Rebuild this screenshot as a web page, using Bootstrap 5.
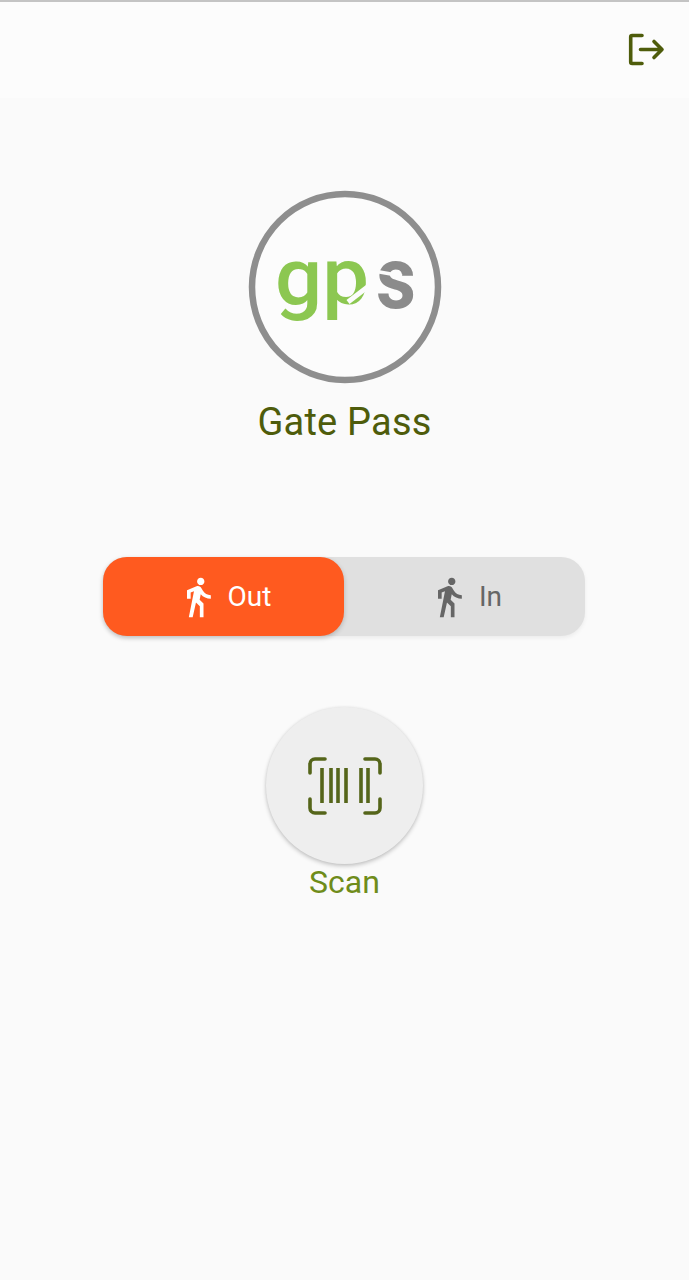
<!DOCTYPE html>
<html lang="en">
<head>
    <meta charset="UTF-8">
    <title>Gate Pass</title>
    <link href="https://cdn.jsdelivr.net/npm/bootstrap@5.3.3/dist/css/bootstrap.min.css" rel="stylesheet">
    <style>
        body {
            background: #fafafa;
            font-family: Roboto, "Liberation Sans", sans-serif;
        }
        .app-screen { min-height: 1280px; }
        .top-bar {
            height: 98px;
            background: #fcfcfc;
            border-top: 2px solid #c4c4c4;
            padding: 30px 23px 0 0;
        }
        .gp-logo {
            margin-top: 92px;
            filter: blur(.5px);
        }
        .app-title {
            color: #4e5c0b;
            font-size: 38px;
            line-height: 42px;
            margin-top: 17px;
            letter-spacing: .2px;
        }
        .mode-toggle {
            width: 482px;
            height: 79px;
            margin-top: 114px;
            margin-right: 1px;
            background: #e0e0e0;
            border-radius: 24px;
            box-shadow: 0 2px 4px rgba(0,0,0,.06);
        }
        .mode-btn {
            width: 241px;
            border-radius: 24px;
            font-size: 28px;
            color: #666;
            gap: 8px;
        }
        .mode-btn.is-active {
            background: #ff5a1f;
            color: #fff;
            box-shadow: 0 2px 5px rgba(0,0,0,.2);
        }
        .scan-btn {
            width: 157px;
            height: 157px;
            margin-top: 71px;
            background: #eeeeee;
            box-shadow: 0 2px 4px rgba(0,0,0,.22), 0 0 3px rgba(0,0,0,.06);
        }
        .scan-label {
            color: #6f8c1a;
            font-size: 32px;
            line-height: 36px;
        }
    </style>
</head>
<body>
    <div class="app-screen d-flex flex-column align-items-center">
        <div class="top-bar w-100 d-flex justify-content-end align-items-start">
            <svg width="38" height="36" viewBox="0 0 38 36" fill="none" stroke="#4e5c0b" stroke-width="3.6" stroke-linecap="round" stroke-linejoin="round">
                <path d="M14 3.5H4.2a1.5 1.5 0 0 0-1.5 1.5v25a1.5 1.5 0 0 0 1.5 1.5H14"/>
                <path d="M12.5 17.5H34M26 9.5l8 8-8 8"/>
            </svg>
        </div>

        <svg class="gp-logo" width="194" height="194" viewBox="0 0 194 194">
            <circle cx="97" cy="97" r="93" fill="#fcfcfc" stroke="#8e8e8e" stroke-width="6.5"/>
            <text x="27" y="114" font-family="Roboto, sans-serif" font-weight="500" font-size="80" fill="#8cc751" textLength="94" lengthAdjust="spacingAndGlyphs">gp</text>
            <text x="128" y="118" font-family="Roboto, sans-serif" font-weight="700" font-size="88" fill="#8b8b8b" textLength="40" lengthAdjust="spacingAndGlyphs">s</text>
            <path d="M100 112L126 92" stroke="#fcfcfc" stroke-width="5" fill="none"/>
            <path d="M126 81L154 86" stroke="#fcfcfc" stroke-width="3.5" fill="none"/>
        </svg>

        <div class="app-title">Gate Pass</div>

        <div class="mode-toggle d-flex">
            <button type="button" class="btn mode-btn is-active d-flex align-items-center justify-content-center border-0 p-0">
                <svg width="44" height="44" viewBox="0 0 24 24" fill="#fff"><path d="M13.5 5.5c1.1 0 2-.9 2-2s-.9-2-2-2-2 .9-2 2 .9 2 2 2zM9.8 8.9L7 23h2.1l1.8-8 2.1 2v6h2v-7.5l-2.1-2 .6-3C14.8 12 16.8 13 19 13v-2c-1.9 0-3.5-1-4.3-2.4l-1-1.6c-.4-.6-1-1-1.7-1-.3 0-.5.1-.8.1L6 8.3V13h2V9.6l1.8-.7"/></svg>
                <span>Out</span>
            </button>
            <button type="button" class="btn mode-btn d-flex align-items-center justify-content-center border-0 p-0">
                <svg width="44" height="44" viewBox="0 0 24 24" fill="#666"><path d="M13.5 5.5c1.1 0 2-.9 2-2s-.9-2-2-2-2 .9-2 2 .9 2 2 2zM9.8 8.9L7 23h2.1l1.8-8 2.1 2v6h2v-7.5l-2.1-2 .6-3C14.8 12 16.8 13 19 13v-2c-1.9 0-3.5-1-4.3-2.4l-1-1.6c-.4-.6-1-1-1.7-1-.3 0-.5.1-.8.1L6 8.3V13h2V9.6l1.8-.7"/></svg>
                <span>In</span>
            </button>
        </div>

        <button type="button" class="btn scan-btn rounded-circle d-flex align-items-center justify-content-center border-0 p-0">
            <svg width="74" height="60" viewBox="0 0 74 60" fill="none" stroke="#55651a" stroke-linecap="round">
                <path stroke-width="3.6" d="M17 3H7a5 5 0 0 0-5 5v9M57 3h10a5 5 0 0 1 5 5v9M17 57H7a5 5 0 0 1-5-5v-9M57 57h10a5 5 0 0 0 5-5v-9"/>
                <path stroke-width="3.6" stroke-linecap="butt" d="M14 12v35M23 12v35M30 12v35M38 12v35M53 12v35M60 12v35"/>
            </svg>
        </button>
        <div class="scan-label">Scan</div>
    </div>

    <script src="https://cdn.jsdelivr.net/npm/bootstrap@5.3.3/dist/js/bootstrap.bundle.min.js"></script>
</body>
</html>
